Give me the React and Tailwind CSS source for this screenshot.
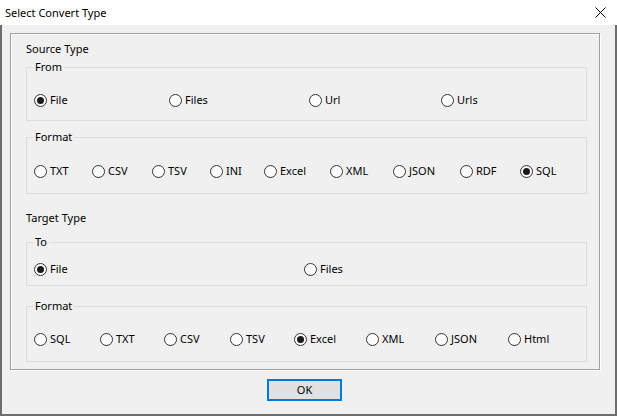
import React from "react";

const FROM = [
  { label: "File", w: 135, checked: true },
  { label: "Files", w: 140 },
  { label: "Url", w: 132 },
  { label: "Urls", w: 60 },
];

const SOURCE_FORMATS = [
  { label: "TXT", w: 58 },
  { label: "CSV", w: 60 },
  { label: "TSV", w: 58 },
  { label: "INI", w: 54 },
  { label: "Excel", w: 66 },
  { label: "XML", w: 63 },
  { label: "JSON", w: 67 },
  { label: "RDF", w: 60 },
  { label: "SQL", w: 50, checked: true },
];

const TO = [
  { label: "File", w: 270, checked: true },
  { label: "Files", w: 60 },
];

const TARGET_FORMATS = [
  { label: "SQL", w: 66 },
  { label: "TXT", w: 64 },
  { label: "CSV", w: 66 },
  { label: "TSV", w: 64 },
  { label: "Excel", w: 72, checked: true },
  { label: "XML", w: 69 },
  { label: "JSON", w: 73 },
  { label: "Html", w: 50 },
];

function Radio({ label, w, checked }) {
  return (
    <label className="flex h-[16px] shrink-0 items-center" style={{ width: w }}>
      <span className="flex h-[13px] w-[13px] items-center justify-center rounded-full border border-[#333333] bg-white">
        {checked && <span className="h-[7px] w-[7px] rounded-full bg-[#1a1a1a]" />}
      </span>
      <span className="ml-[3px] leading-[16px]">{label}</span>
    </label>
  );
}

function Group({ title, items, className }) {
  return (
    <fieldset className={`w-[561px] border border-[#dcdcdc] pl-[7px] ${className}`}>
      <legend className="ml-[-1px] px-[2px] leading-[16px]">{title}</legend>
      <div className="flex">
        {items.map((it) => (
          <Radio key={it.label} {...it} />
        ))}
      </div>
    </fieldset>
  );
}

export default function App() {
  return (
    <div
      className="flex h-[416px] w-[617px] flex-col bg-[#f0f0f0] text-[11px] text-black"
      style={{ fontFamily: '"Noto Sans", "Liberation Sans", sans-serif' }}
    >
      <div className="flex h-[25px] shrink-0 items-center justify-between bg-white pl-[5px] pr-[11px]">
        <span className="leading-[16px]">Select Convert Type</span>
        <svg width="11" height="11" viewBox="0 0 11 11">
          <path d="M0.5 0.5 L10.5 10.5 M10.5 0.5 L0.5 10.5" stroke="#000" strokeWidth="1" />
        </svg>
      </div>

      <div className="flex flex-1 flex-col border-x-2 border-b-2 border-[#6d6d6d]">
        <div className="ml-[8px] mt-[8px] w-[590px] border border-[#a0a0a0] pb-[7px] pl-[15px] pt-[7px] shadow-[inset_1px_1px_0_#ffffff,1px_1px_0_#ffffff]">
          <div className="leading-[16px]">Source Type</div>
          <Group title="From" items={FROM} className="mt-[2px] pb-[12px] pt-[17px]" />
          <Group title="Format" items={SOURCE_FORMATS} className="mt-[8px] pb-[14px] pt-[18px]" />

          <div className="mt-[16px] leading-[16px]">Target Type</div>
          <Group title="To" items={TO} className="mt-[8px] pb-[8px] pt-[11px]" />
          <Group title="Format" items={TARGET_FORMATS} className="mt-[12px] pb-[14px] pt-[17px]" />
        </div>

        <div className="ml-[265px] mt-[9px]">
          <button
            type="button"
            className="flex h-[22px] w-[75px] items-center justify-center border-2 border-[#0078d7] bg-[#e1e1e1] leading-[16px]"
          >
            OK
          </button>
        </div>
      </div>
    </div>
  );
}
